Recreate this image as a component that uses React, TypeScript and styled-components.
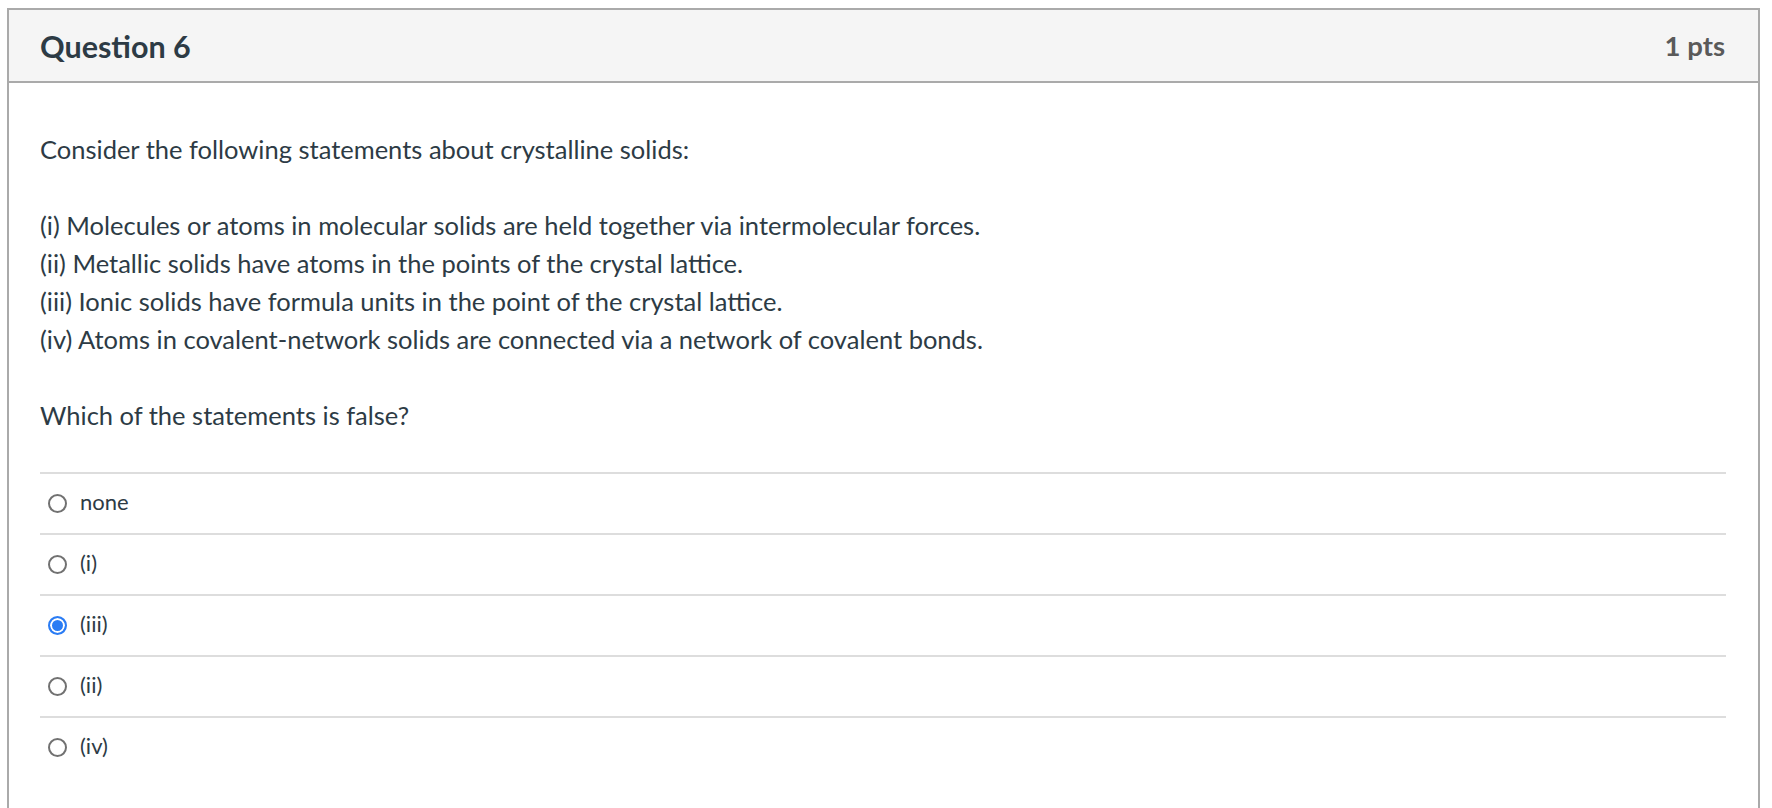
import styled, { createGlobalStyle } from "styled-components"

const GlobalStyle = createGlobalStyle`
  html, body {
    margin: 0;
    padding: 0;
    background: #ffffff;
  }
  body {
    font-family: Lato, "Noto Sans", sans-serif;
    color: #2d3b45;
  }
`

const Page = styled.div`
  padding: 8px 12px 0 7px;`

const QuestionBox = styled.div`
  border: 2px solid #aaaaaa;
  border-bottom: none;
  background: #ffffff;`

const Header = styled.div`
  height: 71px;
  display: flex;
  align-items: center;
  justify-content: space-between;
  padding: 0 33px 0 31px;
  background: #f5f5f5;
  border-bottom: 2px solid #aaaaaa;`

const Title = styled.h2`
  margin: 0;
  font-size: 30.5px;
  font-weight: 700;
  color: #2d3b45;`

const Points = styled.span`
  font-size: 27.5px;
  font-weight: 700;
  color: #5a5a5a;`

const Body = styled.div`
  padding: 47px 32px 40px 31px;
  font-size: 25.5px;
  line-height: 38px;`

const Paragraph = styled.p`
  margin: 0 0 38px 0;`

const Answers = styled.div`
  display: flex;
  flex-direction: column;`

const AnswerRow = styled.label`
  height: 59px;
  display: flex;
  align-items: center;
  gap: 13px;
  padding-left: 8px;
  border-top: 2px solid #dddddd;
  font-size: 22px;
  line-height: 1;
  cursor: pointer;`

const AnswerText = styled.span`
  padding-bottom: 4px;`

const Radio = styled.input.attrs({ type: "radio" })`
  appearance: none;
  margin: 0;
  width: 19px;
  height: 19px;
  border-radius: 50%;
  border: 2px solid #717171;
  background: #ffffff;
  box-sizing: border-box;

  &:checked {
    border-color: #2a7cf4;
    background: #2a7cf4;
    box-shadow: inset 0 0 0 2px #ffffff;
  }`

const answers = ["none", "(i)", "(iii)", "(ii)", "(iv)"]

const App = () => {
  return (
    <Page>
      <GlobalStyle />
      <QuestionBox>
        <Header>
          <Title>Question 6</Title>
          <Points>1 pts</Points>
        </Header>
        <Body>
          <Paragraph>Consider the following statements about crystalline solids:</Paragraph>
          <Paragraph>
            (i) Molecules or atoms in molecular solids are held together via intermolecular forces.
            <br />
            (ii) Metallic solids have atoms in the points of the crystal lattice.
            <br />
            (iii) Ionic solids have formula units in the point of the crystal lattice.
            <br />
            (iv) Atoms in covalent-network solids are connected via a network of covalent bonds.
          </Paragraph>
          <Paragraph>Which of the statements is false?</Paragraph>
          <Answers>
            {answers.map(a => (
              <AnswerRow key={a}>
                <Radio name="q6" defaultChecked={a === "(iii)"} />
                <AnswerText>{a}</AnswerText>
              </AnswerRow>
            ))}
          </Answers>
        </Body>
      </QuestionBox>
    </Page>
  )
}

export default App
